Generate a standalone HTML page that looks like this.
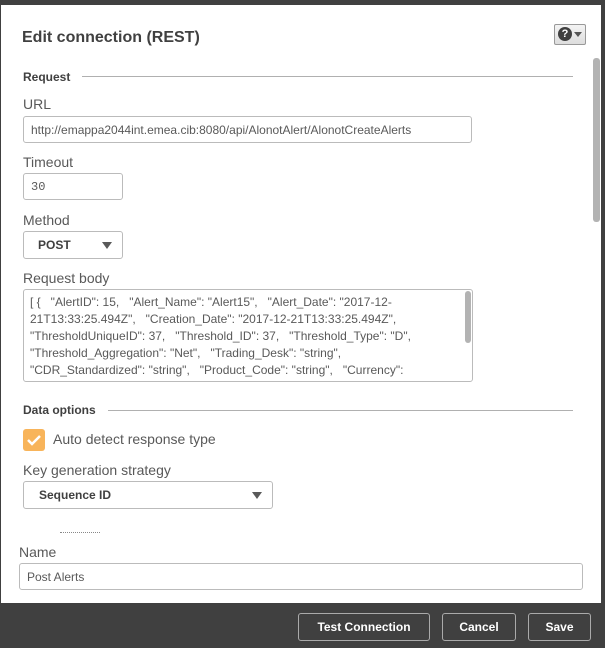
<!DOCTYPE html>
<html><head><meta charset="utf-8"><style>
*{box-sizing:border-box;margin:0;padding:0}
body{width:605px;height:648px;background:#404040;position:relative;overflow:hidden;font-family:"Liberation Sans",sans-serif;color:#595959}
.modal{position:absolute;left:1px;top:5px;width:600px;height:598px;background:#fff}
.a{position:absolute}
h1{position:absolute;left:22px;top:29px;font-size:16px;font-weight:bold;color:#404040}
.sec{position:absolute;font-size:12px;font-weight:bold;color:#404040}
.line{position:absolute;height:1px;background:#b0b0b0}
.lbl{position:absolute;font-size:14px;color:#595959}
.inp{position:absolute;border:1px solid #bbb;border-radius:3px;background:#fff;font-size:12px;color:#595959;padding-left:7px;display:flex;align-items:center}
.btn{position:absolute;top:613px;height:28px;border:1px solid #aaa;border-radius:3px;color:#fff;font-weight:bold;font-size:12px;display:flex;align-items:center;justify-content:center}
.tri{width:0;height:0;border-left:5px solid transparent;border-right:5px solid transparent;border-top:7px solid #595959;position:absolute}
</style></head><body>
<div class="modal"></div>
<h1>Edit connection (REST)</h1>
<div class="a" style="left:554px;top:24px;width:32px;height:21px;border:1px solid #999;background:linear-gradient(#f4f4f4,#ddd);border-radius:2px">
<div class="a" style="left:3px;top:2px;width:14px;height:14px;border-radius:50%;background:#404040;color:#fff;font-size:11px;font-weight:bold;text-align:center;line-height:14px">?</div>
<div class="a" style="left:19px;top:7px;width:0;height:0;border-left:4px solid transparent;border-right:4px solid transparent;border-top:5px solid #555"></div>
</div>
<div class="a" style="left:593px;top:58px;width:7px;height:164px;background:#b3b3b3;border-radius:3px"></div>

<div class="sec" style="left:23px;top:70px">Request</div>
<div class="line" style="left:82px;top:76px;width:491px"></div>
<div class="lbl" style="left:23px;top:96px">URL</div>
<div class="inp" style="left:23px;top:116px;width:449px;height:27px">http://emappa2044int.emea.cib:8080/api/AlonotAlert/AlonotCreateAlerts</div>
<div class="lbl" style="left:23px;top:154px">Timeout</div>
<div class="inp" style="left:23px;top:173px;width:100px;height:27px;font-family:'Liberation Mono',monospace">30</div>
<div class="lbl" style="left:23px;top:212px">Method</div>
<div class="inp" style="left:23px;top:231px;width:100px;height:28px;font-weight:bold;padding-left:14px;color:#404040">POST<div class="tri" style="left:78px;top:10px"></div></div>
<div class="lbl" style="left:23px;top:270px">Request body</div>
<div class="a" style="left:23px;top:289px;width:450px;height:93px;border:1px solid #bbb;border-radius:3px;font-size:12px;line-height:17px;padding:4px 6px 0;overflow:hidden;color:#595959;white-space:nowrap">[ { &nbsp; "AlertID": 15, &nbsp; "Alert_Name": "Alert15", &nbsp; "Alert_Date": "2017-12-<br>21T13:33:25.494Z", &nbsp; "Creation_Date": "2017-12-21T13:33:25.494Z",<br>"ThresholdUniqueID": 37, &nbsp; "Threshold_ID": 37, &nbsp; "Threshold_Type": "D",<br>"Threshold_Aggregation": "Net", &nbsp; "Trading_Desk": "string",<br>"CDR_Standardized": "string", &nbsp; "Product_Code": "string", &nbsp; "Currency":
<div class="a" style="left:441px;top:1px;width:6px;height:52px;background:#b3b3b3;border-radius:3px"></div></div>

<div class="sec" style="left:23px;top:403px">Data options</div>
<div class="line" style="left:108px;top:410px;width:465px"></div>
<div class="a" style="left:23px;top:429px;width:22px;height:22px;background:#f8b45a;border-radius:3px">
<svg width="22" height="22"><path d="M5 11 L9 15 L17 7" stroke="#fff" stroke-width="2.5" fill="none"/></svg></div>
<div class="lbl" style="left:53px;top:431px">Auto detect response type</div>
<div class="lbl" style="left:23px;top:462px">Key generation strategy</div>
<div class="inp" style="left:23px;top:481px;width:250px;height:28px;font-weight:bold;padding-left:15px;color:#404040">Sequence ID<div class="tri" style="left:228px;top:10px"></div></div>
<div class="a" style="left:60px;top:532px;width:40px;height:2px;border-top:1px dotted #888"></div>

<div class="lbl" style="left:19px;top:544px">Name</div>
<div class="inp" style="left:19px;top:563px;width:564px;height:27px;padding-left:7px">Post Alerts</div>

<div class="btn" style="left:298px;width:132px">Test Connection</div>
<div class="btn" style="left:442px;width:74px">Cancel</div>
<div class="btn" style="left:528px;width:63px">Save</div>
</body></html>
